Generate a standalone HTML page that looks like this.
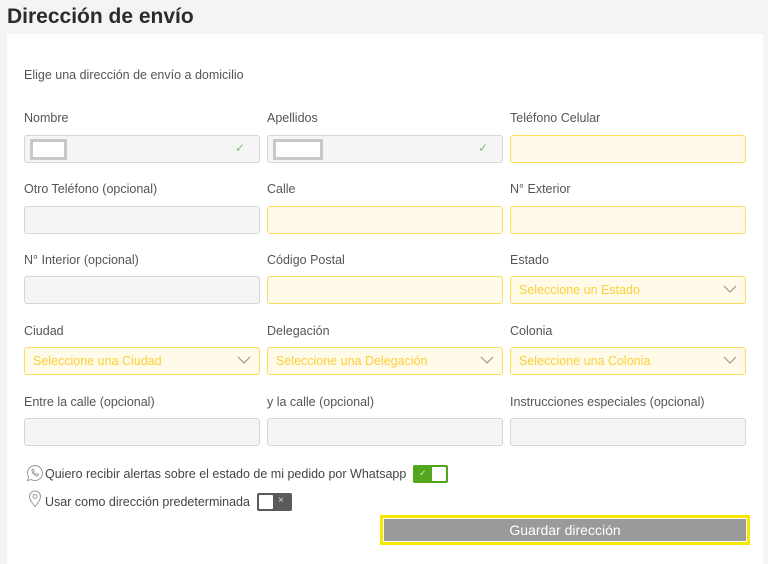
<!DOCTYPE html>
<html><head><meta charset="utf-8"><style>
*{box-sizing:border-box;margin:0;padding:0}
body{width:768px;height:554px;background:#f4f4f4;font-family:"Liberation Sans",sans-serif;position:relative;overflow:hidden;color:#444}
h1{position:absolute;left:7px;top:5px;font-size:21px;font-weight:bold;color:#2b2b2b}
.card{position:absolute;left:7px;top:34px;width:756px;height:530px;background:#fff}
.t{position:absolute;font-size:12.5px;color:#555;white-space:nowrap}
.i{position:absolute;width:236px;height:28px;border:1px solid #d6d6d6;border-radius:3px;background:#f5f5f5}
.y{background:#fffbe8;border-color:#fadc60}
.s{font-size:12.5px;color:#fbcf3a;padding:6px 0 0 8px;white-space:nowrap}
.chev{position:absolute;right:8px;top:8px}
.ck{position:absolute;right:14px;top:5px;color:#7cc26a;font-size:12px}
.box{position:absolute;left:5px;top:3px;width:37px;height:21px;border:3px solid #c8c8c8;background:#fff}
</style></head><body>
<h1>Dirección de envío</h1>
<div class="card"></div>
<div class="t" style="left:24px;top:68px;font-size:12.5px">Elige una dirección de envío a domicilio</div>

<div class="t" style="left:24px;top:111px">Nombre</div>
<div class="t" style="left:267px;top:111px">Apellidos</div>
<div class="t" style="left:510px;top:111px">Teléfono Celular</div>
<div class="i" style="left:24px;top:135px"><div class="box"></div><span class="ck">✓</span></div>
<div class="i" style="left:267px;top:135px"><div class="box" style="width:50px"></div><span class="ck">✓</span></div>
<div class="i y" style="left:510px;top:135px"></div>

<div class="t" style="left:24px;top:182px">Otro Teléfono (opcional)</div>
<div class="t" style="left:267px;top:182px">Calle</div>
<div class="t" style="left:510px;top:182px">N° Exterior</div>
<div class="i" style="left:24px;top:206px"></div>
<div class="i y" style="left:267px;top:206px"></div>
<div class="i y" style="left:510px;top:206px"></div>

<div class="t" style="left:24px;top:253px">N° Interior (opcional)</div>
<div class="t" style="left:267px;top:253px">Código Postal</div>
<div class="t" style="left:510px;top:253px">Estado</div>
<div class="i" style="left:24px;top:276px"></div>
<div class="i y" style="left:267px;top:276px"></div>
<div class="i y s" style="left:510px;top:276px">Seleccione un Estado<svg class="chev" width="14" height="9" viewBox="0 0 14 9"><path d="M1 1l6 6 6-6" fill="none" stroke="#999" stroke-width="1.2"/></svg></div>

<div class="t" style="left:24px;top:324px">Ciudad</div>
<div class="t" style="left:267px;top:324px">Delegación</div>
<div class="t" style="left:510px;top:324px">Colonia</div>
<div class="i y s" style="left:24px;top:347px">Seleccione una Ciudad<svg class="chev" width="14" height="9" viewBox="0 0 14 9"><path d="M1 1l6 6 6-6" fill="none" stroke="#999" stroke-width="1.2"/></svg></div>
<div class="i y s" style="left:267px;top:347px">Seleccione una Delegación<svg class="chev" width="14" height="9" viewBox="0 0 14 9"><path d="M1 1l6 6 6-6" fill="none" stroke="#999" stroke-width="1.2"/></svg></div>
<div class="i y s" style="left:510px;top:347px">Seleccione una Colonia<svg class="chev" width="14" height="9" viewBox="0 0 14 9"><path d="M1 1l6 6 6-6" fill="none" stroke="#999" stroke-width="1.2"/></svg></div>

<div class="t" style="left:24px;top:395px">Entre la calle (opcional)</div>
<div class="t" style="left:267px;top:395px">y la calle (opcional)</div>
<div class="t" style="left:510px;top:395px">Instrucciones especiales (opcional)</div>
<div class="i" style="left:24px;top:418px"></div>
<div class="i" style="left:267px;top:418px"></div>
<div class="i" style="left:510px;top:418px"></div>

<svg style="position:absolute;left:26px;top:464px" width="18" height="18" viewBox="0 0 18 18"><path d="M9 1.5a7.5 7.5 0 0 0-6.4 11.4L1.5 16.5l3.7-1a7.5 7.5 0 1 0 3.8-14z" fill="none" stroke="#999" stroke-width="1"/><path d="M6.3 5.5c.4-.5.9-.4 1.1 0l.6 1.4c.1.3 0 .5-.2.7l-.4.4c.5 1 1.3 1.8 2.3 2.3l.4-.4c.2-.2.4-.3.7-.2l1.4.6c.4.2.5.7 0 1.1-1 1-2.4.8-4-.6S5.3 6.5 6.3 5.5z" fill="none" stroke="#999" stroke-width=".9"/></svg>
<div class="t" style="left:45px;top:467px;color:#444">Quiero recibir alertas sobre el estado de mi pedido por Whatsapp</div>
<div style="position:absolute;left:413px;top:465px;width:35px;height:18px;background:#52a51c;border-radius:2px"><span style="position:absolute;left:6px;top:3px;color:#d8f0c8;font-size:9px">✓</span><div style="position:absolute;right:2px;top:2px;width:14px;height:14px;background:#fff;border-radius:1px"></div></div>

<svg style="position:absolute;left:28px;top:490px" width="14" height="18" viewBox="0 0 14 18"><path d="M7 1a5.5 5.5 0 0 0-5.5 5.5C1.5 10.5 7 16.5 7 16.5s5.5-6 5.5-10A5.5 5.5 0 0 0 7 1z" fill="none" stroke="#999" stroke-width="1"/><circle cx="7" cy="6.5" r="2" fill="none" stroke="#999" stroke-width="1"/></svg>
<div class="t" style="left:45px;top:495px;color:#444">Usar como dirección predeterminada</div>
<div style="position:absolute;left:257px;top:493px;width:35px;height:18px;background:#5a5a5a;border-radius:2px"><div style="position:absolute;left:2px;top:2px;width:14px;height:14px;background:#fff;border-radius:1px"></div><span style="position:absolute;left:21px;top:2px;color:#ddd;font-size:10px">×</span></div>

<div style="position:absolute;left:380px;top:515px;width:370px;height:30px;border:3px solid #f8e800;background:#9a9a9a;color:#fff;font-size:14px;text-align:center;line-height:24px;box-shadow:inset 0 0 0 1px #fff">Guardar dirección</div>
</body></html>
